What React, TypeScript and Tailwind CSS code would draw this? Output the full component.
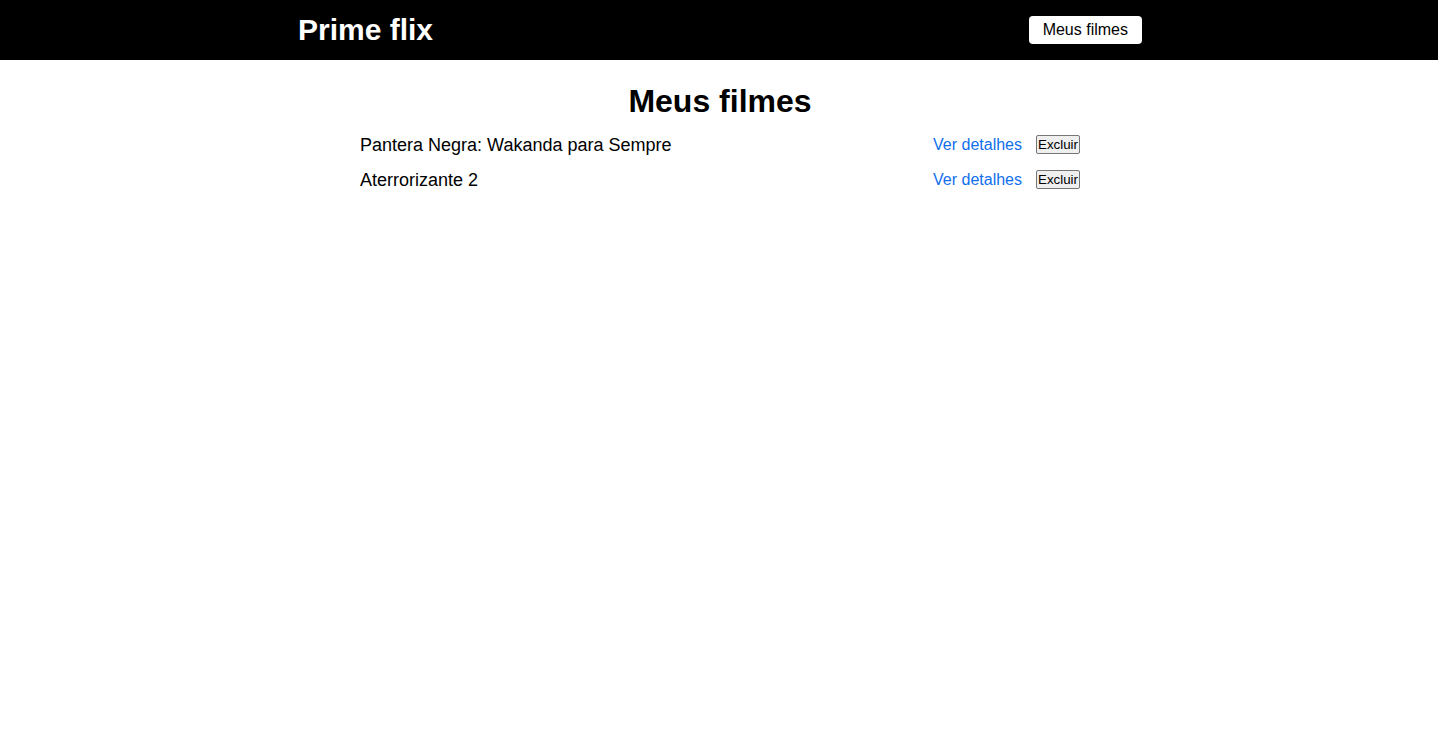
const filmes = [
  { id: 1, title: 'Pantera Negra: Wakanda para Sempre' },
  { id: 2, title: 'Aterrorizante 2' },
];

export default function App() {
  return (
    <div className="min-h-screen bg-white pl-[2px] font-['Liberation_Sans',Arial,sans-serif] text-black">
      <header className="-ml-[2px] flex h-[60px] items-center bg-black pl-[2px]">
        <div className="mx-auto flex w-[844px] items-center justify-between">
          <a href="#" className="text-[30px] font-bold leading-none text-white">
            Prime flix
          </a>
          <a
            href="#"
            className="rounded-[4px] bg-white px-[14px] py-[5px] text-base leading-[18px] text-black"
          >
            Meus filmes
          </a>
        </div>
      </header>

      <div className="mx-auto w-[720px]">
        <h1 className="mt-[23px] text-center text-[32px] font-bold leading-[37px]">Meus filmes</h1>
        <ul className="mt-[7px]">
          {filmes.map((item) => (
            <li key={item.id} className="flex h-[35px] items-center justify-between">
              <span className="text-lg">{item.title}</span>
              <div className="flex items-center">
                <a href="#" className="mr-[14px] text-base text-[#116feb]">
                  Ver detalhes
                </a>
                <button className="rounded-[2px] border border-[#767676] bg-[#efefef] px-[1px] text-[13.33px] leading-[17px]">
                  Excluir
                </button>
              </div>
            </li>
          ))}
        </ul>
      </div>
    </div>
  );
}
